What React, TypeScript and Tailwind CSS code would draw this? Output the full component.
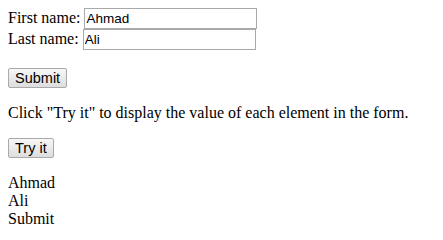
import React from 'react';

const inputCls =
  "h-[21px] w-[173px] border border-[#a9a9a9] bg-white px-[1px] py-0 align-baseline font-['Arial','Liberation_Sans',sans-serif] text-[13.5px] leading-[normal] text-black outline-none";

const buttonCls =
  "h-[20px] rounded-[2px] border border-[#a9a9a9] bg-linear-to-b from-[#f7f7f7] to-[#dddddd] px-[6px] py-0 align-baseline font-['Arial','Liberation_Sans',sans-serif] text-[14.5px] leading-[normal] text-black";

export default function App() {
  const [values, setValues] = React.useState<string[]>(['Ahmad', 'Ali', 'Submit']);

  return (
    <div className="m-2 bg-white font-['Times_New_Roman','Liberation_Serif',serif] text-[16px] leading-[normal] text-black">
      <form onSubmit={(e) => e.preventDefault()}>
        First name: <input className={inputCls} type="text" name="fname" defaultValue="Ahmad" />
        <br />
        Last name: <input className={inputCls} type="text" name="lname" defaultValue="Ali" />
        <br />
        <br />
        <input className={buttonCls} type="submit" value="Submit" />
      </form>

      <p className="my-4">Click "Try it" to display the value of each element in the form.</p>

      <button className={buttonCls} onClick={() => setValues(['Ahmad', 'Ali', 'Submit'])}>
        Try it
      </button>

      <p className="my-4">
        {values.map((v, i) => (
          <React.Fragment key={i}>
            {v}
            <br />
          </React.Fragment>
        ))}
      </p>
    </div>
  );
}
